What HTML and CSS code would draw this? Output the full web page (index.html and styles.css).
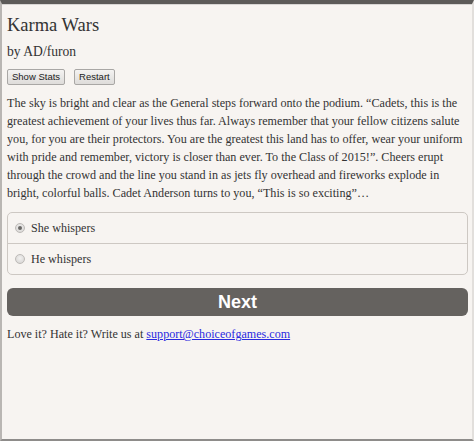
FILE: index.html
```html
<!DOCTYPE html>
<html>
<head>
<meta charset="utf-8">
<link rel="stylesheet" href="styles.css">
</head>
<body>
<div class="frame">
  <h1 class="title">Karma Wars</h1>
  <div class="author">by AD/furon</div>
  <div class="toolbar">
    <button class="tool-btn">Show Stats</button>
    <button class="tool-btn">Restart</button>
  </div>
  <p class="story">The sky is bright and clear as the General steps forward onto the podium. “Cadets, this is the greatest achievement of your lives thus far. Always remember that your fellow citizens salute you, for you are their protectors. You are the greatest this land has to offer, wear your uniform with pride and remember, victory is closer than ever. To the Class of 2015!”. Cheers erupt through the crowd and the line you stand in as jets fly overhead and fireworks explode in bright, colorful balls. Cadet Anderson turns to you, “This is so exciting”…</p>
  <div class="choices">
    <label class="choice"><span class="radio checked"></span>She whispers</label>
    <label class="choice"><span class="radio"></span>He whispers</label>
  </div>
  <button class="next">Next</button>
  <p class="footer">Love it? Hate it? Write us at <a href="#">support@choiceofgames.com</a></p>
</div>
</body>
</html>
```
FILE: styles.css
```css
html, body {
  margin: 0;
  padding: 0;
  background: #f7f4f1;
}
.frame {
  box-sizing: border-box;
  height: 441px;
  border-top: 4px solid #5d5b59;
  border-left: 2px solid #b9b6b3;
  border-right: 2px solid #e2dfdc;
  border-bottom: 2px solid #8e8c8a;
  box-shadow: inset 0 1px 0 #d8d6d4;
  padding: 10px 4px 0 5px;
  font-family: "Liberation Serif", "Times New Roman", serif;
  color: #333;
}
.title {
  margin: 0;
  font-weight: normal;
  font-size: 18.5px;
  line-height: 22px;
  color: #333;
}
.author {
  margin-top: 7px;
  font-size: 13.6px;
  line-height: 18px;
}
.toolbar {
  display: flex;
  gap: 9px;
  margin-top: 8px;
}
.tool-btn {
  font-family: "Liberation Sans", Arial, sans-serif;
  font-size: 9.5px;
  line-height: 12px;
  padding: 1px 4px;
  height: 16px;
  border: 1px solid #a9a7a5;
  border-radius: 2px;
  background: linear-gradient(#f4f3f2, #dedcda);
  color: #222;
}
.story {
  margin: 9px 0 0;
  font-size: 12.15px;
  line-height: 18px;
  color: #333;
}
.choices {
  margin-top: 10px;
  border: 1px solid #cdc8c3;
  border-radius: 5px;
  display: flex;
  flex-direction: column;
}
.choice {
  display: flex;
  align-items: center;
  gap: 6px;
  height: 30px;
  padding-left: 7px;
  font-size: 12.1px;
  color: #333;
}
.choice + .choice {
  border-top: 1px solid #cdc8c3;
}
.radio {
  width: 8px;
  height: 8px;
  border-radius: 50%;
  border: 1px solid #bdbab7;
  background: radial-gradient(circle at 50% 40%, #f2f1f0, #d3d1cf);
  position: relative;
}
.radio.checked::after {
  content: "";
  position: absolute;
  left: 2px;
  top: 2px;
  width: 4px;
  height: 4px;
  border-radius: 50%;
  background: #6a6866;
}
.next {
  display: block;
  width: 100%;
  margin-top: 13px;
  height: 28px;
  border: none;
  border-radius: 6px;
  background: #65625f;
  color: #fff;
  font-family: "Liberation Sans", Arial, sans-serif;
  font-weight: bold;
  font-size: 18px;
  padding: 0;
}
.footer {
  margin: 9px 0 0;
  font-size: 12.1px;
  line-height: 18px;
  color: #333;
}
.footer a {
  color: #2a2ae0;
}
```
